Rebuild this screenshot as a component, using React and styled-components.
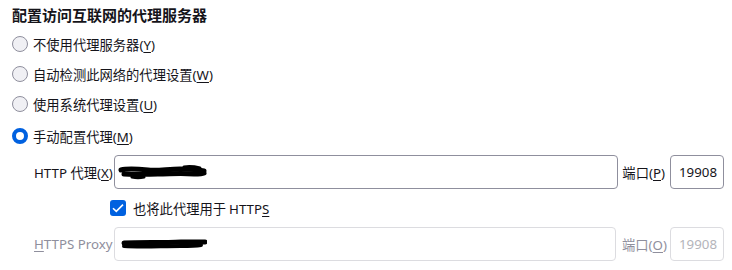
import React from "react";
import styled, { createGlobalStyle } from "styled-components";

const Global = createGlobalStyle`
  html, body { margin: 0; padding: 0; background: #ffffff; }
  body {
    font-family: "Noto Sans", "Noto Sans CJK SC", sans-serif;
    color: #15141a;
    font-size: 13.3px;
  }
`;

const Page = styled.div`
  display: flex;
  flex-direction: column;
  padding: 5px 8px 0 12px;
  width: 732px;
  box-sizing: border-box;
`;

const Title = styled.h2`
  margin: 0 0 4px 0;
  font-size: 15px;
  line-height: 20px;
  font-weight: 700;
  font-family: "Noto Sans CJK SC", sans-serif;
`;

const RadioRow = styled.label`
  display: flex;
  align-items: center;
  height: 30px;
  gap: 5px;
  margin-top: ${(p) => p.$mt || 0}px;
  font-family: "Noto Sans CJK SC", sans-serif;
`;

const RadioDot = styled.span`
  width: 16px;
  height: 16px;
  box-sizing: border-box;
  border-radius: 50%;
  border: ${(p) => (p.$checked ? "4px solid #0061e0" : "1px solid #8f8f9d")};
  background: ${(p) => (p.$checked ? "#ffffff" : "#f0f0f4")};
  flex: none;
`;

const Key = styled.span`
  text-decoration: underline;
  text-underline-offset: 2px;
  text-decoration-thickness: 1px;
`;

const Paren = styled.span`
  font-family: "Noto Sans", sans-serif;
`;

const FieldRow = styled.div`
  display: grid;
  grid-template-columns: 76px 1fr 44px 54px;
  column-gap: 4px;
  align-items: center;
  margin-left: 22px;
  margin-top: ${(p) => p.$mt || 0}px;
  color: ${(p) => (p.$disabled ? "#8f8f9d" : "#15141a")};
`;

const FieldLabel = styled.span`
  text-align: right;
  white-space: nowrap;
  font-family: "Noto Sans", "Noto Sans CJK SC", sans-serif;
  padding-right: ${(p) => p.$pr || 0}px;
`;

const TextBox = styled.div`
  height: 34px;
  box-sizing: border-box;
  border: 1px solid ${(p) => (p.$disabled ? "#dcdce0" : "#8f8f9d")};
  border-radius: 4px;
  display: flex;
  align-items: center;
  padding-left: ${(p) => p.$pl || 4}px;
  background: #ffffff;
  color: ${(p) => (p.$disabled ? "#b4b4ba" : "#15141a")};
  font-family: "Noto Sans", sans-serif;
  margin-left: ${(p) => p.$ml || 0}px;
  margin-right: ${(p) => p.$mr || 0}px;
`;

const CheckRow = styled.label`
  display: flex;
  align-items: center;
  gap: 7px;
  height: 36px;
  margin-left: 98px;
  margin-top: 1px;
  font-family: "Noto Sans CJK SC", sans-serif;
`;

const CheckBox = styled.span`
  width: 16px;
  height: 16px;
  border-radius: 3px;
  background: #0061e0;
  display: flex;
  align-items: center;
  justify-content: center;
  flex: none;
`;

const Latin = styled.span`
  font-family: "Noto Sans", sans-serif;
`;

function Scribble({ variant }) {
  if (variant === 1) {
    return (
      <svg width="90" height="18" viewBox="0 0 90 18">
        <path d="M3 7 C10 5 20 6 30 7 C40 8 50 6 62 6 C70 6 78 6 86 8" stroke="#000" strokeWidth="5" fill="none" strokeLinecap="round" />
        <path d="M6 11 C16 12 28 11 40 11 C52 11 62 10 76 11 C80 11 84 11 86 10" stroke="#000" strokeWidth="5" fill="none" strokeLinecap="round" />
        <path d="M14 14 C18 15 22 15 26 14" stroke="#000" strokeWidth="3" fill="none" strokeLinecap="round" />
        <path d="M66 4 C72 3 78 4 82 5" stroke="#000" strokeWidth="3" fill="none" strokeLinecap="round" />
      </svg>
    );
  }
  return (
    <svg width="86" height="12" viewBox="0 0 86 12">
      <path d="M3 5 C20 4 40 5 60 4 C70 4 78 4 84 4" stroke="#000" strokeWidth="5" fill="none" strokeLinecap="round" />
      <path d="M3 8 C20 9 40 8 60 8 C68 8 74 8 80 7" stroke="#000" strokeWidth="4" fill="none" strokeLinecap="round" />
    </svg>
  );
}

export default function App() {
  return (
    <>
      <Global />
      <Page>
        <Title>配置访问互联网的代理服务器</Title>
        <RadioRow>
          <RadioDot />
          <span>
            不使用代理服务器<Paren>(<Key>Y</Key>)</Paren>
          </span>
        </RadioRow>
        <RadioRow>
          <RadioDot />
          <span>
            自动检测此网络的代理设置<Paren>(<Key>W</Key>)</Paren>
          </span>
        </RadioRow>
        <RadioRow>
          <RadioDot />
          <span>
            使用系统代理设置<Paren>(<Key>U</Key>)</Paren>
          </span>
        </RadioRow>
        <RadioRow $mt={2}>
          <RadioDot $checked />
          <span>
            手动配置代理<Paren>(<Key>M</Key>)</Paren>
          </span>
        </RadioRow>
        <FieldRow $mt={4}>
          <FieldLabel>
            HTTP 代理(<Key>X</Key>)
          </FieldLabel>
          <TextBox $pl={3}>
            <Scribble variant={1} />
          </TextBox>
          <FieldLabel $pr={1}>
            端口(<Key>P</Key>)
          </FieldLabel>
          <TextBox $pl={8}>19908</TextBox>
        </FieldRow>
        <CheckRow>
          <CheckBox>
            <svg width="12" height="10" viewBox="0 0 12 10">
              <path d="M1 5.2 L4.3 8.4 L11 1.6" stroke="#fff" strokeWidth="1.6" fill="none" />
            </svg>
          </CheckBox>
          <span>
            也将此代理用于 <Latin>HTTP<Key>S</Key></Latin>
          </span>
        </CheckRow>
        <FieldRow $mt={1} $disabled>
          <FieldLabel>
            <Key>H</Key>TTPS Proxy
          </FieldLabel>
          <TextBox $disabled $pl={6} $mr={2}>
            <Scribble variant={2} />
          </TextBox>
          <FieldLabel $pr={1}>
            端口(<Key>O</Key>)
          </FieldLabel>
          <TextBox $disabled $pl={8}>19908</TextBox>
        </FieldRow>
      </Page>
    </>
  );
}
